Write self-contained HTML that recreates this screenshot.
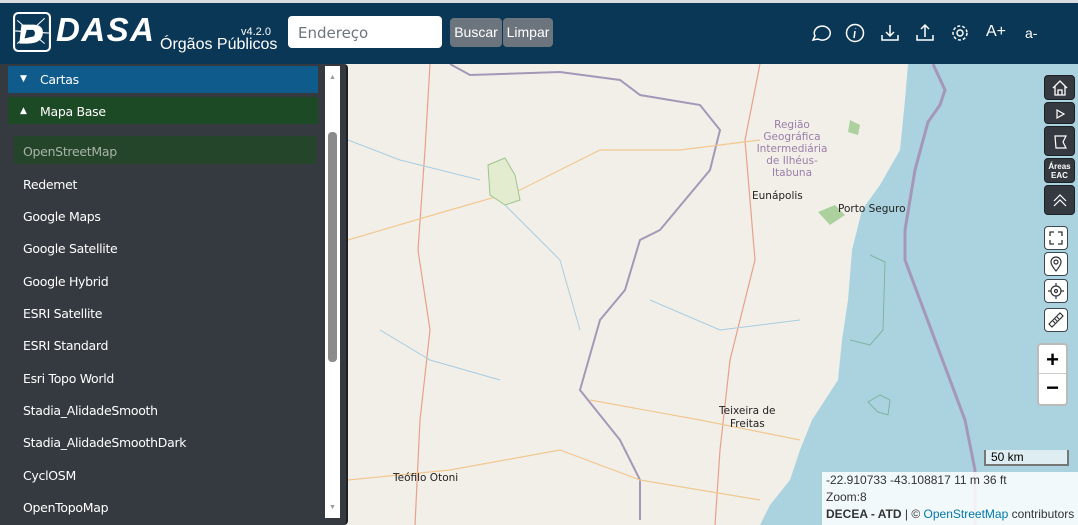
<!DOCTYPE html>
<html><head><meta charset="utf-8"><style>
*{margin:0;padding:0;box-sizing:border-box}
body{width:1078px;height:525px;overflow:hidden;font-family:"Liberation Sans",sans-serif;background:#f2efe9;position:relative}
#hdr{position:absolute;left:0;top:0;width:1078px;height:64px;background:#0b3756;border-top:3px solid #d8dde2}
.w{color:#fff;position:absolute}
#side{position:absolute;left:0;top:64px;width:348px;height:461px;background:#353a40;border-right:2px solid #1d2024;border-radius:0 4px 4px 0}
.item{position:absolute;left:23px;color:#fff;font-size:12.5px;font-family:"DejaVu Sans",sans-serif;letter-spacing:-0.3px}
.btn{position:absolute;left:1044px;width:31px;background:#353a40;border-radius:4px;border:1px solid #1d2024}
.wb{position:absolute;left:1044px;width:24px;height:24px;background:#fff;border:1.5px solid #3a4650;border-radius:4px}
</style></head><body>
<svg style="position:absolute;left:0;top:0" width="1078" height="525">
<rect x="348" y="64" width="730" height="461" fill="#f2efe9"/>
<path d="M908 64 L905 100 L900 150 L880 185 L862 210 L852 250 L848 300 L842 340 L838 380 L812 420 L800 450 L790 480 L770 505 L760 525 L1078 525 L1078 64Z" fill="#aad3df"/>
<path d="M933 64 L945 90 L940 105 L928 122 L915 170 L905 230 L905 260 L935 340 L965 420 L975 470 L975 525" stroke="#a597b8" stroke-width="3" fill="none"/>
<path d="M870 255 L885 262 L883 330 L870 345 L850 340" stroke="#7db4a0" fill="none"/>
<path d="M880 395 L890 400 L888 415 L878 412 L868 402Z" stroke="#7db4a0" fill="none"/>
<path d="M450 64 L470 75 L560 72 L620 80 L640 95 L700 105 L720 130 L710 170 L660 230 L640 240 L625 290 L600 320 L580 390 L620 440 L640 480 L640 520" stroke="#a597b8" stroke-width="2" fill="none"/>
<path d="M430 64 L425 150 L418 250 L430 330 L420 420 L415 525" stroke="#e8a08a" stroke-width="1.2" fill="none"/>
<path d="M760 64 L745 140 L755 260 L730 360 L720 450 L715 525" stroke="#e8a08a" stroke-width="1.2" fill="none"/>
<path d="M348 240 L450 210 L520 190 L600 150 L680 150 L760 140 M590 400 L700 420 L800 440 M348 480 L450 470 L560 450 L640 480 L760 500" stroke="#f0c890" stroke-width="1.2" fill="none"/>
<path d="M348 140 L400 160 L480 180 M500 200 L560 260 L580 330 M650 300 L720 330 L800 320 M380 330 L430 360 L500 380" stroke="#a8cde0" stroke-width="1" fill="none"/>
<path d="M488 165 L505 158 L515 175 L520 200 L505 205 L490 195Z" stroke="#9cc58a" fill="#e4ecd0"/>
<path d="M818 212 L835 205 L845 215 L830 225Z M850 120 L860 125 L858 135 L848 132Z" fill="#add19e"/>
<text x="792" y="128" font-size="10.5" fill="#9a7ea8" font-family="DejaVu Sans" text-anchor="middle">Região</text>
<text x="792" y="140" font-size="10.5" fill="#9a7ea8" font-family="DejaVu Sans" text-anchor="middle">Geográfica</text>
<text x="792" y="152" font-size="10.5" fill="#9a7ea8" font-family="DejaVu Sans" text-anchor="middle">Intermediária</text>
<text x="792" y="164" font-size="10.5" fill="#9a7ea8" font-family="DejaVu Sans" text-anchor="middle">de Ilhéus-</text>
<text x="792" y="176" font-size="10.5" fill="#9a7ea8" font-family="DejaVu Sans" text-anchor="middle">Itabuna</text>
<g font-size="10.5" fill="#222" font-family="DejaVu Sans">
<text x="752" y="199">Eunápolis</text><text x="838" y="212">Porto Seguro</text>
<text x="719" y="414">Teixeira de</text><text x="730" y="427">Freitas</text>
<text x="393" y="481">Teófilo Otoni</text></g>
</svg>
<div id="hdr">
<svg style="position:absolute;left:13px;top:8px" width="38" height="42" viewBox="0 0 36 38"><rect x="1" y="1" width="34" height="36" rx="4" fill="none" stroke="#fff" stroke-width="2"/><path d="M4 8 L30 30 M4 30 L30 6 M2 18 L34 20" stroke="#fff" stroke-width="1"/><path d="M8 12 L20 12 Q30 13 28 22 Q26 30 14 30 L6 30Z" fill="#fff"/><path d="M13 17 L19 17 Q22 19 20 23 L11 25Z" fill="#0b3756"/></svg>
<div class="w" style="left:56px;top:8px;font-size:33px;font-weight:bold;font-style:italic;letter-spacing:1.5px">DASA</div>
<div class="w" style="left:241px;top:23px;font-size:11px">v4.2.0</div>
<div class="w" style="left:160px;top:33px;font-size:16px;font-family:'Liberation Sans',sans-serif">Órgãos Públicos</div>
<div style="position:absolute;left:288px;top:13px;width:154px;height:32px;background:#fff;border-radius:4px;color:#6c757d;font-size:15px;padding:8px 10px;font-family:'DejaVu Sans'">Endereço</div>
<div class="w" style="left:450px;top:15px;width:52px;height:29px;background:#6c757d;border-radius:4px;font-size:14px;text-align:center;line-height:29px">Buscar</div>
<div class="w" style="left:503px;top:15px;width:50px;height:29px;background:#6c757d;border-radius:4px;font-size:14px;text-align:center;line-height:29px">Limpar</div>
<svg style="position:absolute;left:810px;top:18px" width="240" height="24" fill="none" stroke="#fff" stroke-width="1.5">
<path d="M3 19 L5 15 A8 7 0 1 1 8 18Z"/>
<circle cx="45" cy="12" r="8.5"/><path d="M45 10 L44 17 M45.5 7 v0.5"/>
<path d="M72 14 v5 h16 v-5 M80 4 v11 M76 11 l4 4 4-4"/>
<path d="M107 14 v5 h16 v-5 M115 16 v-12 M111 8 l4-4 4 4"/>
<circle cx="150" cy="12" r="3"/><circle cx="150" cy="12" r="7" stroke-dasharray="3 2"/>
</svg>
<div class="w" style="left:986px;top:20px;font-size:16px">A+</div>
<div class="w" style="left:1025px;top:22px;font-size:14px">a-</div>
</div>
<div id="side">
<div style="position:absolute;left:8px;top:2px;width:310px;height:27px;background:#0f5c8c"></div>
<div class="item" style="left:20px;top:10px;font-size:9px">▼</div><div class="item" style="left:40px;top:8px">Cartas</div>
<div style="position:absolute;left:8px;top:33px;width:310px;height:27px;background:#1b4a24"></div>
<div class="item" style="left:20px;top:42px;font-size:9px">▲</div><div class="item" style="left:40px;top:40px">Mapa Base</div>
<div style="position:absolute;left:14px;top:72px;width:302px;height:28px;background:#25452a"></div>
<div class="item" style="top:80px;color:#a7b4a8">OpenStreetMap</div>
<div class="item" style="top:113px">Redemet</div>
<div class="item" style="top:145px">Google Maps</div>
<div class="item" style="top:177px">Google Satellite</div>
<div class="item" style="top:210px">Google Hybrid</div>
<div class="item" style="top:242px">ESRI Satellite</div>
<div class="item" style="top:274px">ESRI Standard</div>
<div class="item" style="top:307px">Esri Topo World</div>
<div class="item" style="top:339px">Stadia_AlidadeSmooth</div>
<div class="item" style="top:371px">Stadia_AlidadeSmoothDark</div>
<div class="item" style="top:404px">CyclOSM</div>
<div class="item" style="top:436px">OpenTopoMap</div>
<div style="position:absolute;left:325px;top:2px;width:15px;height:452px;background:#fff"></div>
<div style="position:absolute;left:328px;top:68px;width:9px;height:230px;background:#8b8b8b;border-radius:4px"></div>
<div style="position:absolute;left:329px;top:10px;font-size:7px;color:#999">▲</div>
<div style="position:absolute;left:329px;top:440px;font-size:7px;color:#999">▼</div>
</div>
<div class="btn" style="top:75px;height:25px"><svg width="31" height="25" fill="none" stroke="#fff" stroke-width="1.3"><path d="M8 12 L15 5 L22 12 M10 10 v9 h10 v-9 M13 19 v-5 h4 v5"/></svg></div>
<div class="btn" style="top:102px;height:22px"><svg width="31" height="22" fill="none" stroke="#fff" stroke-width="1.2"><path d="M12 7 L19 11 L12 15Z"/></svg></div>
<div class="btn" style="top:126px;height:30px"><svg width="31" height="30" fill="none" stroke="#fff" stroke-width="1.2"><path d="M10 9 L21 9 L18 15 L21 21 L11 21Z"/></svg></div>
<div class="btn" style="top:158px;height:25px;color:#fff;font-size:8px;text-align:center;line-height:9px;padding-top:3px;font-weight:bold">Áreas<br>EAC</div>
<div class="btn" style="top:185px;height:30px"><svg width="31" height="30" fill="none" stroke="#fff" stroke-width="1.2"><path d="M9 15 l6-6 6 6 M9 20 l6-6 6 6"/></svg></div>
<div class="wb" style="top:226px"><svg width="22" height="22" fill="none" stroke="#333" stroke-width="1.3"><path d="M5 9 V5 H9 M13 5 H17 V9 M17 13 V17 H13 M9 17 H5 V13"/></svg></div>
<div class="wb" style="top:252px"><svg width="22" height="22" fill="none" stroke="#333" stroke-width="1.2"><path d="M11 18 C6 12 6 10 6 9 A5 5 0 0 1 16 9 C16 10 16 12 11 18Z"/><circle cx="11" cy="9" r="2"/></svg></div>
<div class="wb" style="top:279px"><svg width="22" height="22" fill="none" stroke="#333" stroke-width="1.2"><circle cx="11" cy="11" r="5"/><circle cx="11" cy="11" r="1.5"/><path d="M11 3v3M11 16v3M3 11h3M16 11h3"/></svg></div>
<div class="wb" style="top:308px"><svg width="22" height="22" fill="none" stroke="#333" stroke-width="1.2"><path d="M4 15 L15 4 L18 7 L7 18Z M8 12l2 2M10 10l2 2M12 8l2 2"/></svg></div>
<div style="position:absolute;left:1037px;top:343px;width:31px;height:63px;background:#fff;border:2px solid #bbb;border-radius:4px">
<div style="height:29px;border-bottom:1px solid #ccc;text-align:center;font-size:22px;font-weight:bold;line-height:29px">+</div>
<div style="text-align:center;font-size:22px;font-weight:bold;line-height:28px">−</div></div>
<div style="position:absolute;left:984px;top:450px;width:85px;height:16px;border:2px solid #777;border-top:none;background:rgba(255,255,255,.6);font-size:12px;padding-left:5px;line-height:15px">50 km</div>
<div style="position:absolute;left:822px;top:472px;width:256px;height:53px;background:rgba(255,255,255,.85);font-size:12px;line-height:17px;padding-left:4px;color:#333">-22.910733 -43.108817 11 m 36 ft<br>Zoom:8<br><b>DECEA - ATD</b> | © <span style="color:#0078a8">OpenStreetMap</span> contributors</div>
</body></html>
